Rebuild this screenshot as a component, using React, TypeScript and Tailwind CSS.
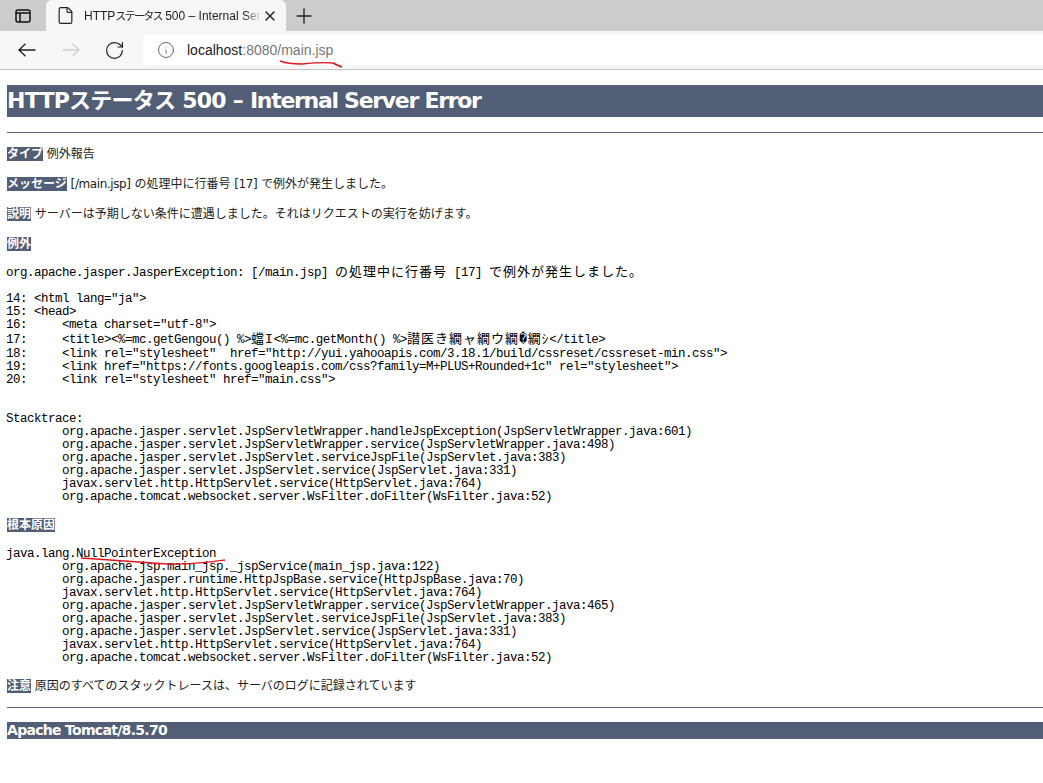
import React from "react";
import { RotateCw, Info, X, Plus, File } from "lucide-react";

const Label = ({ children }: { children: React.ReactNode }) => (
  <b className="bg-[#525d76] text-white font-bold text-[12px] leading-[14px] inline-block">{children}</b>
);

const Para = ({ label, children, cls }: { label: string; children?: React.ReactNode; cls: string }) => (
  <p className={`whitespace-nowrap text-[12px] leading-[14px] text-[#222] font-['DejaVu_Sans','Noto_Sans_CJK_JP',sans-serif] ${cls}`}>
    <Label>{label}</Label> {children}
  </p>
);

const Latin = ({ children }: { children: React.ReactNode }) => (
  <span className="tracking-[-0.4px]">{children}</span>
);

const Mono = ({ children, cls = "" }: { children?: React.ReactNode; cls?: string }) => (
  <div className={`h-[13px] leading-[13px] whitespace-pre ${cls}`}>{children}</div>
);

const Wide = ({ children }: { children: React.ReactNode }) => (
  <span className="text-[13px] tracking-[1px]">{children}</span>
);

const Arrow = ({ color, flip }: { color: string; flip?: boolean }) => (
  <svg width="18" height="14" viewBox="0 0 18 14" fill="none" stroke={color} strokeWidth="1.3" className={flip ? "-scale-x-100" : ""}>
    <path d="M1 7H17.500M7.500 0.800L1 7L7.500 13.200" />
  </svg>
);

const trace1 = [
  "org.apache.jasper.servlet.JspServletWrapper.handleJspException(JspServletWrapper.java:601)",
  "org.apache.jasper.servlet.JspServletWrapper.service(JspServletWrapper.java:498)",
  "org.apache.jasper.servlet.JspServlet.serviceJspFile(JspServlet.java:383)",
  "org.apache.jasper.servlet.JspServlet.service(JspServlet.java:331)",
  "javax.servlet.http.HttpServlet.service(HttpServlet.java:764)",
  "org.apache.tomcat.websocket.server.WsFilter.doFilter(WsFilter.java:52)",
];
const trace2 = [
  "org.apache.jsp.main_jsp._jspService(main_jsp.java:122)",
  "org.apache.jasper.runtime.HttpJspBase.service(HttpJspBase.java:70)",
  "javax.servlet.http.HttpServlet.service(HttpServlet.java:764)",
  "org.apache.jasper.servlet.JspServletWrapper.service(JspServletWrapper.java:465)",
  "org.apache.jasper.servlet.JspServlet.serviceJspFile(JspServlet.java:383)",
  "org.apache.jasper.servlet.JspServlet.service(JspServlet.java:331)",
  "javax.servlet.http.HttpServlet.service(HttpServlet.java:764)",
  "org.apache.tomcat.websocket.server.WsFilter.doFilter(WsFilter.java:52)",
];

export default function App() {
  return (
    <div className="relative w-[1043px] h-[783px] overflow-hidden bg-white font-['Liberation_Sans','Noto_Sans_CJK_JP',sans-serif]">
      <div className="flex h-[31px] bg-[#cccccc]">
        <div className="w-[46px] flex items-center justify-center">
          <svg width="16" height="14" viewBox="0 0 16 14" fill="none" stroke="#111" strokeWidth="1.5">
            <rect x="1" y="1" width="14" height="12" rx="2" />
            <path d="M1 4h14M5 4v9" />
          </svg>
        </div>
        <div className="w-[240px] bg-[#f7f7f7] rounded-t-[6px] flex items-center pl-[10px]">
          <File size={19} strokeWidth={1.5} color="#222" />
          <span className="ml-[9px] w-[178px] overflow-hidden whitespace-nowrap text-[12px] text-[#222] [mask-image:linear-gradient(to_right,black_90%,transparent)]">
            HTTP<span className="text-[11px] tracking-[-1.7px]">ステータス</span> 500 – Internal Server Error
          </span>
          <X size={16} strokeWidth={2.2} color="#222" className="ml-0" />
        </div>
        <div className="w-[36px] flex items-center justify-center">
          <Plus size={24} strokeWidth={1.4} color="#222" />
        </div>
      </div>
      <div className="flex h-[39px] items-center bg-[#f7f7f7] border-b border-[#c4c4c4]">
        <div className="w-[143px] flex items-center pl-[18px]">
          <Arrow color="#222" />
          <span className="ml-[26px]"><Arrow color="#cfcfcf" flip /></span>
          <RotateCw size={21} strokeWidth={1.4} color="#222" className="ml-[24px]" />
        </div>
        <div className="flex-1 h-[30px] bg-white rounded-l-[4px] flex items-center pl-[14px]">
          <Info size={18} strokeWidth={1.3} color="#666" />
          <span className="ml-[12px] text-[14px] text-[#222]">
            localhost<span className="text-[#777]">:8080/main.jsp</span>
          </span>
        </div>
      </div>

      <main className="pl-[7px]">
        <h1 className="mt-[15px] h-[32px] bg-[#525d76] text-white font-bold text-[22px] leading-[32px] whitespace-nowrap font-['DejaVu_Sans','Noto_Sans_CJK_JP',sans-serif] tracking-[-0.75px]">
          HTTPステータス 500 – <span className="tracking-[-1.3px]">Internal Server Error</span>
        </h1>
        <hr className="mt-[15px] border-0 h-px bg-[#525d76]" />
        <Para cls="mt-[14px]" label="タイプ">例外報告</Para>
        <Para cls="mt-[16px]" label="メッセージ">
          <Latin>[/main.jsp]</Latin> の処理中に行番号 <Latin>[17]</Latin> で例外が発生しました。
        </Para>
        <Para cls="mt-[16px]" label="説明">サーバーは予期しない条件に遭遇しました。それはリクエストの実行を妨げます。</Para>
        <Para cls="mt-[16px]" label="例外" />

        <div className="text-[12.5px] tracking-[-0.5px] text-black font-['Liberation_Mono','Noto_Sans_CJK_JP',monospace] -ml-px">
          <Mono cls="mt-[15px]">
            org.apache.jasper.JasperException: [/main.jsp] <Wide>の処理中に行番号</Wide> [17] <Wide>で例外が発生しました。</Wide>
          </Mono>
          <Mono cls="mt-[14px]">{'14: <html lang="ja">'}</Mono>
          <Mono>{'15: <head>'}</Mono>
          <Mono>{'16:     <meta charset="utf-8">'}</Mono>
          <Mono cls="mt-[1px] mb-[2px]">
            {'17:     <title><%=mc.getGengou() %>'}<Wide>蟷I</Wide>{'<%=mc.getMonth() %>'}<Wide>譛医き繝ャ繝ウ繝�繝ｼ</Wide>{'</title>'}
          </Mono>
          <Mono>{'18:     <link rel="stylesheet"  href="http://yui.yahooapis.com/3.18.1/build/cssreset/cssreset-min.css">'}</Mono>
          <Mono>{'19:     <link href="https://fonts.googleapis.com/css?family=M+PLUS+Rounded+1c" rel="stylesheet">'}</Mono>
          <Mono>{'20:     <link rel="stylesheet" href="main.css">'}</Mono>

          <Mono cls="mt-[26px]">Stacktrace:</Mono>
          {trace1.map((t) => (
            <Mono key={t}>{"        " + t}</Mono>
          ))}
        </div>

        <Para cls="mt-[14px]" label="根本原因" />

        <div className="text-[12.5px] tracking-[-0.5px] text-black font-['Liberation_Mono','Noto_Sans_CJK_JP',monospace] -ml-px">
          <Mono cls="mt-[16px]">java.lang.NullPointerException</Mono>
          {trace2.map((t, i) => (
            <Mono key={i}>{"        " + t}</Mono>
          ))}
        </div>

        <Para cls="mt-[14px]" label="注意">原因のすべてのスタックトレースは、サーバのログに記録されています</Para>
        <hr className="mt-[14px] border-0 h-px bg-[#525d76]" />
        <h3 className="mt-[14px] h-[17px] bg-[#525d76] text-white font-bold text-[14px] leading-[17px] font-['DejaVu_Sans',sans-serif] tracking-[-0.7px]">
          Apache Tomcat/8.5.70
        </h3>
      </main>

      <svg className="absolute left-0 top-0 pointer-events-none" width="1043" height="783" fill="none" stroke="#e5141e" strokeWidth="1.4">
        <path d="M280 61 C 287 64, 294 64, 302 64 C 312 63, 325 62, 333 63 C 337 65, 339 66, 342 67" />
        <path d="M81 558 C 110 560, 140 562, 167 564 C 190 565, 210 562, 225 560" />
      </svg>
    </div>
  );
}
